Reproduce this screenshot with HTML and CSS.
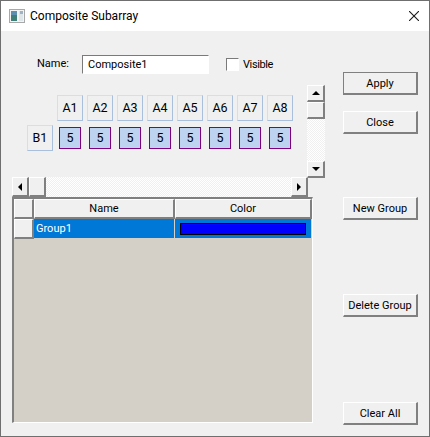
FILE: index.html
```html
<!DOCTYPE html>
<html lang="en">
<head>
    <meta charset="UTF-8">
    <title>Composite Subarray</title>
    <link rel="stylesheet" href="styles.css">
</head>
<body>
    <div class="window">
        <div class="titlebar">
            <svg class="appicon" width="16" height="14" viewBox="0 0 16 14">
                <rect x="0.5" y="0.5" width="15" height="13" fill="#f4f4f4" stroke="#a8a8a8"/>
                <rect x="2" y="2" width="6" height="10" fill="#3f7f78"/>
                <rect x="2" y="2" width="6" height="4" fill="#5f8fb0"/>
                <rect x="10" y="2" width="4" height="10" fill="#dfe6ea"/>
                <rect x="11" y="2" width="3" height="3" fill="#9fb3c2"/>
            </svg>
            <span class="title">Composite Subarray</span>
            <svg class="closeicon" width="10" height="10" viewBox="0 0 10 10">
                <path d="M0 0L10 10M10 0L0 10" stroke="#1a1a1a" stroke-width="1.1" fill="none"/>
            </svg>
        </div>
        <div class="content">
            <div class="left">
                <div class="namerow">
                    <label class="namelabel">Name:</label>
                    <div class="nameinput">Composite1</div>
                    <span class="check"></span>
                    <span class="checklabel">Visible</span>
                </div>
                <div class="arrayarea">
                    <div class="cells">
                        <div class="row-a">
                            <div class="head">A1</div>
                            <div class="head">A2</div>
                            <div class="head">A3</div>
                            <div class="head">A4</div>
                            <div class="head">A5</div>
                            <div class="head">A6</div>
                            <div class="head">A7</div>
                            <div class="head">A8</div>
                        </div>
                        <div class="row-b">
                            <div class="head">B1</div>
                            <div class="val">5</div>
                            <div class="val">5</div>
                            <div class="val">5</div>
                            <div class="val">5</div>
                            <div class="val">5</div>
                            <div class="val">5</div>
                            <div class="val">5</div>
                            <div class="val">5</div>
                        </div>
                    </div>
                    <div class="vscroll">
                        <div class="sbtn"><span class="arr up"></span></div>
                        <div class="sbtn"></div>
                        <div class="track"></div>
                        <div class="sbtn"><span class="arr down"></span></div>
                    </div>
                </div>
                <div class="hscroll">
                    <div class="sbtn"><span class="arr lft"></span></div>
                    <div class="sbtn"></div>
                    <div class="track"></div>
                    <div class="sbtn"><span class="arr rgt"></span></div>
                </div>
                <div class="grid">
                    <div class="gridrow">
                        <div class="corner"></div>
                        <div class="colhead name-col">Name</div>
                        <div class="colhead color-col">Color</div>
                    </div>
                    <div class="gridrow">
                        <div class="corner"></div>
                        <div class="cell name-col">Group1</div>
                        <div class="cell color-col"><div class="swatch"></div></div>
                    </div>
                </div>
            </div>
            <div class="right">
                <button class="btn default">Apply</button>
                <button class="btn close">Close</button>
                <button class="btn newgroup">New Group</button>
                <button class="btn delgroup">Delete Group</button>
                <button class="btn clearall">Clear All</button>
            </div>
        </div>
    </div>
</body>
</html>
```

FILE: styles.css
```css
*{
    margin: 0;
    padding: 0;
    box-sizing: border-box;
}
body{
    width: 430px;
    height: 437px;
    overflow: hidden;
    font-family: Roboto, "Liberation Sans", sans-serif;
    font-size: 11px;
    color: #000;
}
.window{
    display: flex;
    flex-direction: column;
    width: 430px;
    height: 437px;
    background: #f0f0f0;
    border: 1px solid #6f6f6f;
}
.titlebar{
    display: flex;
    align-items: center;
    height: 30px;
    padding: 0 10px 1px 8px;
    background: #fff;
}
.appicon{
    margin-right: 5px;
}
.title{
    flex: 1;
    font-size: 12px;
}
.content{
    display: flex;
    flex: 1;
}
.left{
    width: 324px;
    padding: 24px 0 0 11px;
}
.namerow{
    display: flex;
    align-items: center;
    height: 19px;
    padding-left: 25px;
}
.namelabel{
    width: 45px;
    padding-bottom: 2px;
}
.nameinput{
    width: 127px;
    height: 19px;
    padding: 0 0 0 5px;
    line-height: 18px;
    background: #fff;
    border: 1px solid #fff;
    border-top: 1px solid #7a7a7a;
    border-left: 1px solid #7a7a7a;
}
.check{
    width: 13px;
    height: 13px;
    margin-left: 17px;
    background: #fff;
    border: 1px solid #7a7a7a;
    border-right-color: #fff;
    border-bottom-color: #fff;
}
.checklabel{
    margin-left: 4px;
    letter-spacing: -0.4px;
}
.arrayarea{
    display: flex;
    height: 93px;
    margin-top: 11px;
}
.cells{
    width: 295px;
    padding-top: 10px;
}
.row-a,.row-b{
    display: flex;
    gap: 4px;
}
.row-a{
    padding-left: 45px;
}
.row-b{
    gap: 8px;
    align-items: center;
    margin-top: 4px;
    padding-left: 15px;
}
.head{
    width: 26px;
    height: 26px;
    line-height: 24px;
    text-align: center;
    font-size: 12.5px;
    border: 1px solid #a9c0dc;
    border-top-color: #cfe0f4;
    border-left-color: #cfe0f4;
}
.val{
    width: 22px;
    height: 22px;
    line-height: 20px;
    text-align: center;
    font-size: 12.5px;
    background: #bdd3ef;
    border: 1px solid #800080;
}
.row-b .head{
    margin-right: -2px;
}
.vscroll{
    display: flex;
    flex-direction: column;
    width: 18px;
}
.hscroll{
    display: flex;
    width: 296px;
    height: 20px;
    margin-top: -1px;
}
.sbtn{
    display: flex;
    flex: none;
    align-items: center;
    justify-content: center;
    background: #f0f0f0;
    border: 1px solid #fff;
    border-right: 2px solid #808080;
    border-bottom: 2px solid #808080;
}
.vscroll .sbtn{
    height: 17px;
}
.hscroll .sbtn{
    width: 17px;
}
.track{
    flex: 1;
    background: repeating-conic-gradient(#fff 0 25%, #f0f0f0 0 50%) 0 0/2px 2px;
}
.arr{
    width: 0;
    height: 0;
    border-style: solid;
    border-color: transparent;
}
.arr.up{
    border-width: 0 4px 4px;
    border-bottom-color: #000;
}
.arr.down{
    border-width: 4px 4px 0;
    border-top-color: #000;
}
.arr.lft{
    border-width: 4px 4px 4px 0;
    border-right-color: #000;
}
.arr.rgt{
    border-width: 4px 0 4px 4px;
    border-left-color: #000;
}
.grid{
    width: 301px;
    height: 226px;
    background: #d4d0c8;
    border: 2px solid #808080;
    border-right: 1px solid #fff;
    border-bottom: 1px solid #fff;
}
.gridrow{
    display: flex;
    height: 20px;
}
.corner{
    width: 20px;
    background: #f0f0f0;
    border: 1px solid #fff;
    border-right: 2px solid #808080;
    border-bottom: 2px solid #808080;
}
.name-col{
    width: 141px;
}
.color-col{
    width: 137px;
}
.colhead{
    line-height: 17px;
    text-align: center;
    background: #f0f0f0;
    border: 1px solid #fff;
    border-right: 2px solid #808080;
    border-bottom: 2px solid #808080;
}
.cell{
    padding-left: 2px;
    line-height: 19px;
    color: #fff;
    background: #0078d7;
    border-right: 1px solid #d4d0c8;
    border-bottom: 1px solid #d4d0c8;
}
.cell.color-col{
    padding: 4px 5px 3px 5px;
}
.swatch{
    height: 12px;
    background: #0000ff;
    border: 1px solid #000;
}
.right{
    display: flex;
    flex-direction: column;
    width: 75px;
    margin-left: 18px;
    padding-top: 41px;
}
.btn{
    flex: none;
    height: 23px;
    font: inherit;
    background: #f0f0f0;
    border: 1px solid #fff;
    border-right: 2px solid #808080;
    border-bottom: 2px solid #808080;
}
.btn.default{
    border: 2px solid #808080;
    border-top-width: 1px;
    border-left-width: 1px;
}
.btn.close{
    margin-top: 16px;
}
.btn.newgroup{
    margin-top: 63px;
}
.btn.delgroup{
    margin-top: 74px;
}
.btn.clearall{
    margin-top: 85px;
}
```
